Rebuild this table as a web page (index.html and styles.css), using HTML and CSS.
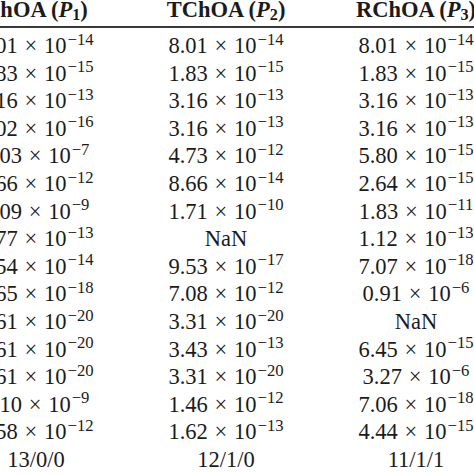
FILE: index.html
```html
<!DOCTYPE html>
<html lang="en">
<head>
    <meta charset="UTF-8">
    <meta name="viewport" content="width=device-width, initial-scale=1.0">
    <title>ChOA variants comparison</title>
    <link rel="stylesheet" href="styles.css">
</head>
<body>
    <!-- Comparison of ChOA variants (cropped view) -->
    <table class="results">
        <colgroup>
            <col class="col-val">
            <col class="col-val">
            <col class="col-val">
        </colgroup>
        <thead>
            <tr>
                <th>ChOA (<i>P</i><sub>1</sub>)</th>
                <th>TChOA (<i>P</i><sub>2</sub>)</th>
                <th>RChOA (<i>P</i><sub>3</sub>)</th>
            </tr>
        </thead>
        <tbody>
            <tr>
                <td>8.01<span class="x">×</span>10<sup>−14</sup></td>
                <td>8.01<span class="x">×</span>10<sup>−14</sup></td>
                <td>8.01<span class="x">×</span>10<sup>−14</sup></td>
            </tr>
            <tr>
                <td>1.83<span class="x">×</span>10<sup>−15</sup></td>
                <td>1.83<span class="x">×</span>10<sup>−15</sup></td>
                <td>1.83<span class="x">×</span>10<sup>−15</sup></td>
            </tr>
            <tr>
                <td>3.16<span class="x">×</span>10<sup>−13</sup></td>
                <td>3.16<span class="x">×</span>10<sup>−13</sup></td>
                <td>3.16<span class="x">×</span>10<sup>−13</sup></td>
            </tr>
            <tr>
                <td>3.02<span class="x">×</span>10<sup>−16</sup></td>
                <td>3.16<span class="x">×</span>10<sup>−13</sup></td>
                <td>3.16<span class="x">×</span>10<sup>−13</sup></td>
            </tr>
            <tr>
                <td>4.03<span class="x">×</span>10<sup>−7</sup></td>
                <td>4.73<span class="x">×</span>10<sup>−12</sup></td>
                <td>5.80<span class="x">×</span>10<sup>−15</sup></td>
            </tr>
            <tr>
                <td>8.66<span class="x">×</span>10<sup>−12</sup></td>
                <td>8.66<span class="x">×</span>10<sup>−14</sup></td>
                <td>2.64<span class="x">×</span>10<sup>−15</sup></td>
            </tr>
            <tr>
                <td>1.09<span class="x">×</span>10<sup>−9</sup></td>
                <td>1.71<span class="x">×</span>10<sup>−10</sup></td>
                <td>1.83<span class="x">×</span>10<sup>−11</sup></td>
            </tr>
            <tr>
                <td>1.77<span class="x">×</span>10<sup>−13</sup></td>
                <td>NaN</td>
                <td>1.12<span class="x">×</span>10<sup>−13</sup></td>
            </tr>
            <tr>
                <td>9.54<span class="x">×</span>10<sup>−14</sup></td>
                <td>9.53<span class="x">×</span>10<sup>−17</sup></td>
                <td>7.07<span class="x">×</span>10<sup>−18</sup></td>
            </tr>
            <tr>
                <td>7.65<span class="x">×</span>10<sup>−18</sup></td>
                <td>7.08<span class="x">×</span>10<sup>−12</sup></td>
                <td>0.91<span class="x">×</span>10<sup>−6</sup></td>
            </tr>
            <tr>
                <td>3.61<span class="x">×</span>10<sup>−20</sup></td>
                <td>3.31<span class="x">×</span>10<sup>−20</sup></td>
                <td>NaN</td>
            </tr>
            <tr>
                <td>3.61<span class="x">×</span>10<sup>−20</sup></td>
                <td>3.43<span class="x">×</span>10<sup>−13</sup></td>
                <td>6.45<span class="x">×</span>10<sup>−15</sup></td>
            </tr>
            <tr>
                <td>3.61<span class="x">×</span>10<sup>−20</sup></td>
                <td>3.31<span class="x">×</span>10<sup>−20</sup></td>
                <td>3.27<span class="x">×</span>10<sup>−6</sup></td>
            </tr>
            <tr>
                <td>1.10<span class="x">×</span>10<sup>−9</sup></td>
                <td>1.46<span class="x">×</span>10<sup>−12</sup></td>
                <td>7.06<span class="x">×</span>10<sup>−18</sup></td>
            </tr>
            <tr>
                <td>1.58<span class="x">×</span>10<sup>−12</sup></td>
                <td>1.62<span class="x">×</span>10<sup>−13</sup></td>
                <td>4.44<span class="x">×</span>10<sup>−15</sup></td>
            </tr>
            <tr class="summary">
                <td>13/0/0</td>
                <td>12/1/0</td>
                <td>11/1/1</td>
            </tr>
        </tbody>
    </table>
</body>
</html>
```

FILE: styles.css
```css
html, body {
    margin: 0;
    padding: 0;
    background-color: #fff;
    overflow: hidden;
}

body {
    font-family: "Liberation Serif", "Times New Roman", serif;
    color: #1b1b1b;
}

.results {
    border-collapse: collapse;
    table-layout: fixed;
    width: 570px;
    margin-left: -59px;
}

.col-val {
    width: 190px;
}

.results th,
.results td {
    padding: 0;
    text-align: center;
    white-space: nowrap;
}

.results th {
    font-size: 22.5px;
    font-weight: bold;
    line-height: 19px;
    padding-bottom: 7px;
    border-bottom: 2px solid #3a3a3a;
}

.results th sub {
    font-size: 0.72em;
    line-height: 0;
    position: relative;
    top: 0.18em;
    vertical-align: baseline;
}

.results td {
    font-size: 22.5px;
    line-height: 27.6px;
}

.results tbody tr:first-child td {
    padding-top: 4px;
}

.x {
    padding: 0 0.3em;
}

.results sup {
    font-size: 0.74em;
    line-height: 0;
    vertical-align: baseline;
    position: relative;
    top: -0.5em;
    padding-left: 1px;
}
```
